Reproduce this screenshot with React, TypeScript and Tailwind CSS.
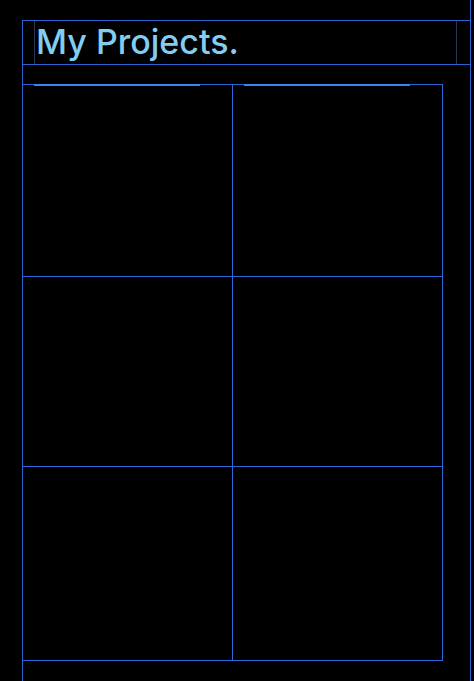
import React from 'react';

const cells = [0, 1, 2, 3, 4, 5];

export default function App() {
  return (
    <div className="min-h-[681px] bg-black" style={{ fontFamily: 'Inter, "Noto Sans", sans-serif' }}>
      <div className="ml-[22px] w-[449px] pt-[20px] min-h-[681px] border-r border-[#2b62d0]">
        <div className="min-h-[661px] border-l border-[#2b62d0]">
          {/* Header */}
          <header className="h-[45px] border-y border-[#2b62d0] pl-[11px] pr-[13px]">
            <h1 className="h-full border-x border-[#2a3550] pl-[1px] text-[34px] leading-[41px] font-medium text-[#82cdf4]">
              My Projects.
            </h1>
          </header>

          {/* Project grid */}
          <div className="mt-[19px] -ml-px grid w-[421px] grid-cols-2 grid-rows-[192px_190px_194px] border-t border-l border-[#2b62d0]">
            {cells.map((i) => (
              <div key={i} className="border-r border-b border-[#2e68dc] px-[11px]">
                {i < 2 && <div className="-mt-px w-[166px] border-t-2 border-[#3b82f6]" />}
              </div>
            ))}
          </div>
        </div>
      </div>
    </div>
  );
}
